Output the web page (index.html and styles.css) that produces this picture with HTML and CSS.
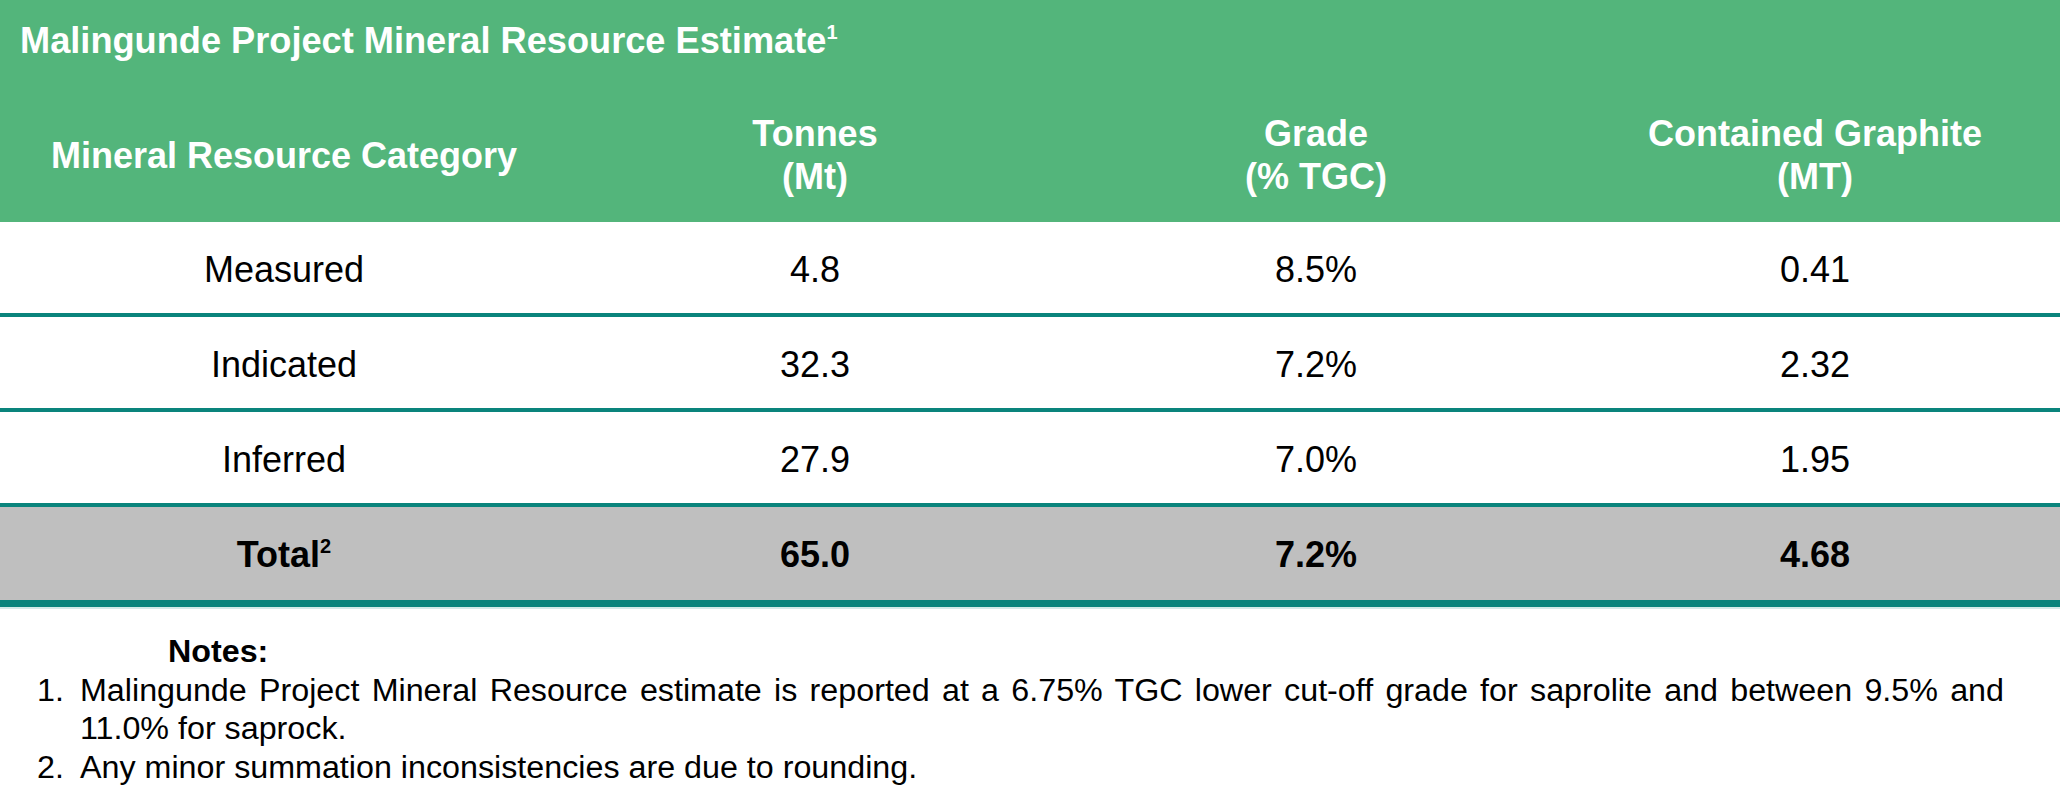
FILE: index.html
```html
<!DOCTYPE html>
<html lang="en">
<head>
<meta charset="utf-8">
<title>Malingunde Project Mineral Resource Estimate</title>
<link rel="stylesheet" href="styles.css">
</head>
<body>
<div class="page">
  <div class="sheet">
    <div class="sheet-head">
      <div class="title">Malingunde Project Mineral Resource Estimate<sup>1</sup></div>
      <div class="row head-row">
        <div class="cell">Mineral Resource Category</div>
        <div class="cell">Tonnes<br>(Mt)</div>
        <div class="cell">Grade<br>(% TGC)</div>
        <div class="cell">Contained Graphite<br>(MT)</div>
      </div>
    </div>
    <div class="row data-row">
      <div class="cell">Measured</div>
      <div class="cell">4.8</div>
      <div class="cell">8.5%</div>
      <div class="cell">0.41</div>
    </div>
    <div class="row data-row">
      <div class="cell">Indicated</div>
      <div class="cell">32.3</div>
      <div class="cell">7.2%</div>
      <div class="cell">2.32</div>
    </div>
    <div class="row data-row">
      <div class="cell">Inferred</div>
      <div class="cell">27.9</div>
      <div class="cell">7.0%</div>
      <div class="cell">1.95</div>
    </div>
    <div class="row total-row">
      <div class="cell">Total<sup>2</sup></div>
      <div class="cell">65.0</div>
      <div class="cell">7.2%</div>
      <div class="cell">4.68</div>
    </div>
  </div>
  <div class="notes">
    <div class="notes-title">Notes:</div>
    <ol class="notes-list">
      <li><span class="num">1.</span><span class="txt">Malingunde Project Mineral Resource estimate is reported at a 6.75% TGC lower cut-off grade for saprolite and between 9.5% and 11.0% for saprock.</span></li>
      <li><span class="num">2.</span><span class="txt">Any minor summation inconsistencies are due to rounding.</span></li>
    </ol>
  </div>
</div>
</body>
</html>
```

FILE: styles.css
```css
html, body {
  margin: 0;
  padding: 0;
  background: #ffffff;
}

body {
  font-family: "Liberation Sans", Arial, sans-serif;
  color: #000000;
  width: 2060px;
}

.page {
  width: 2060px;
}

.sheet-head {
  background: #53b57b;
  color: #ffffff;
}

.title {
  box-sizing: border-box;
  height: 88px;
  padding: 19px 0 0 20px;
  font-size: 36.2px;
  line-height: 43px;
  font-weight: bold;
}

sup {
  font-size: 20px;
  line-height: 0;
  vertical-align: 14px;
}

.row {
  display: grid;
  grid-template-columns: 568px 494px 508px 1fr;
  align-items: center;
  text-align: center;
}

.head-row {
  height: 134px;
  font-size: 36px;
  font-weight: bold;
  line-height: 43px;
}

.data-row {
  height: 91px;
  border-bottom: 4px solid #0a847c;
  font-size: 36px;
  line-height: 40px;
}

.data-row .cell {
  padding-top: 4px;
}

.total-row {
  height: 93px;
  background: #bfbfbf;
  border-bottom: 7px solid #0a847c;
  box-shadow: 0 2px 0 #d4ebe9;
  font-size: 36px;
  line-height: 40px;
  font-weight: bold;
}

.total-row .cell {
  padding-top: 3px;
}

.notes {
  padding: 25px 56px 0 0;
  font-size: 32.25px;
  line-height: 38.5px;
}

.notes-title {
  padding-left: 168px;
  font-weight: bold;
}

.notes-list {
  list-style: none;
  margin: 0;
  padding: 0 0 0 37px;
}

.notes-list li {
  display: flex;
}

.num {
  flex: 0 0 43px;
}

.txt {
  flex: 1 1 auto;
  text-align: justify;
}
```
